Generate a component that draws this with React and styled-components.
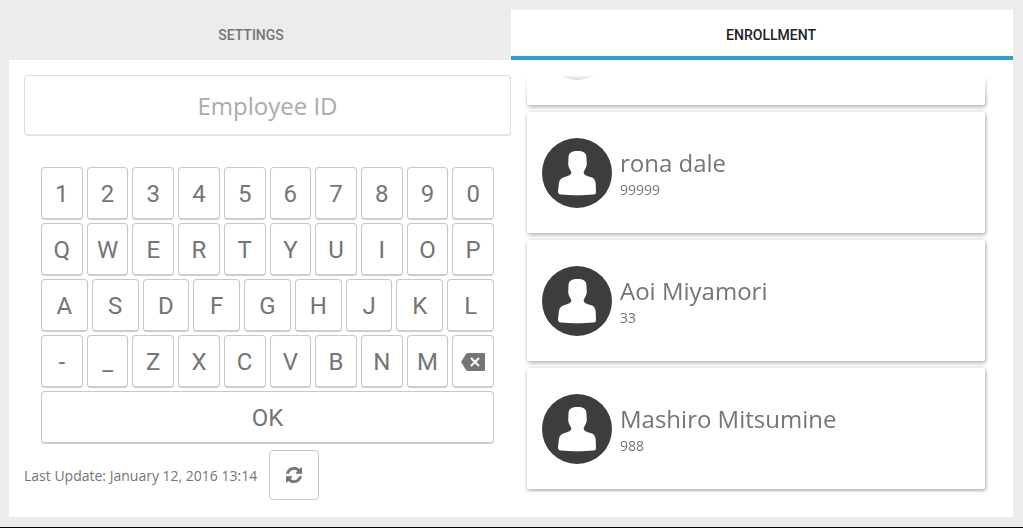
import React, { useState } from "react";
import styled, { createGlobalStyle } from "styled-components";

const rows = [
  ["1", "2", "3", "4", "5", "6", "7", "8", "9", "0"],
  ["Q", "W", "E", "R", "T", "Y", "U", "I", "O", "P"],
  ["A", "S", "D", "F", "G", "H", "J", "K", "L"],
  ["-", "_", "Z", "X", "C", "V", "B", "N", "M", "back"],
  ["OK"],
];

const employees = [
  { id: "", name: "" },
  { id: "99999", name: "rona dale" },
  { id: "33", name: "Aoi Miyamori" },
  { id: "988", name: "Mashiro Mitsumine" },
];

const BackspaceIcon = () => (
  <svg width="24" height="18" viewBox="0 0 24 18" aria-hidden="true">
    <path d="M7 0h16q1 0 1 1v16q0 1-1 1H7q-1 0-2-1L0 9l5-8q1-1 2-1z" fill="#757575" />
    <path d="M10 5l8 8M18 5l-8 8" stroke="#fff" strokeWidth="2" />
  </svg>
);

const RefreshIcon = () => (
  <svg width="16" height="16" viewBox="0 0 1536 1536" aria-hidden="true">
    <path
      fill="#757575"
      stroke="#757575"
      strokeWidth="30"
      d="M1511 928q0 5-1 7-64 268-268 434.500T764 1536q-146 0-282.500-55T238 1324l-129 129q-19 19-45 19t-45-19-19-45V960q0-26 19-45t45-19h448q26 0 45 19t19 45-19 45l-137 137q71 66 161 102t187 36q134 0 250-65t186-179q11-17 53-117 8-23 30-23h192q13 0 22.500 9.500t9.500 22.500zM1536 128v448q0 26-19 45t-45 19h-448q-26 0-45-19t-19-45 19-45l138-138q-148-137-349-137-134 0-250 65T332 500q-11 17-53 117-8 23-30 23H50q-13 0-22.500-9.500T18 608v-7q65-268 270-434.500T768 0q146 0 284 55.500T1297 212l130-129q19-19 45-19t45 19 19 45z"
    />
  </svg>
);

const Avatar = () => (
  <svg width="70" height="70" viewBox="0 0 70 70" aria-hidden="true">
    <circle cx="35" cy="35" r="35" fill="#3d3d3d" />
    <path
      fill="#fff"
      d="M35.500 13C41 13 44.500 14.500 44.500 20L44.800 26C44.800 29 43 31 41.500 34.500C42 37 44.500 38 48.500 39C52.500 40 53.500 43 53.700 46L54 54C54 56 53 56.500 51 56.600C41 57.500 29 57.500 19 56.600C17 56.500 16 55.500 16 53.500L16.800 46C17 42 19 40 22.500 39C26.500 38 29 37 29.500 34.500C28 31.500 26.200 29 26.200 26L26.500 20C26.500 14.500 30 13 35.500 13Z"
    />
  </svg>
);

const App = () => {
  const [tab, setTab] = useState("ENROLLMENT");
  const [employeeId, setEmployeeId] = useState("");

  const pressKey = (key) => {
    if (key === "OK") return;
    if (key === "back") {
      setEmployeeId(employeeId.slice(0, -1));
      return;
    }
    setEmployeeId(employeeId + key);
  };

  return (
    <Page>
      <GlobalStyle />
      <Tabs role="tablist">
        {["SETTINGS", "ENROLLMENT"].map((name) => (
          <Tab
            key={name}
            type="button"
            role="tab"
            aria-selected={tab === name}
            $active={tab === name}
            onClick={() => setTab(name)}
          >
            {name}
          </Tab>
        ))}
      </Tabs>

      <Panel>
        <Entry>
          <IdInput
            type="text"
            aria-label="Employee ID"
            placeholder="Employee ID"
            value={employeeId}
            onChange={(e) => setEmployeeId(e.target.value)}
          />
          <Keyboard>
            {rows.map((row, index) => (
              <KeyRow key={index}>
                {row.map((key) => (
                  <Key
                    key={key}
                    type="button"
                    aria-label={key === "back" ? "Backspace" : undefined}
                    onClick={() => pressKey(key)}
                  >
                    {key === "back" ? <BackspaceIcon /> : key}
                  </Key>
                ))}
              </KeyRow>
            ))}
          </Keyboard>
          <Update>
            <span>Last Update: January 12, 2016 13:14</span>
            <RefreshButton type="button" aria-label="Refresh">
              <RefreshIcon />
            </RefreshButton>
          </Update>
        </Entry>

        <Scroller>
          <List>
            {employees.map(({ id, name }) => (
              <Card key={id}>
                <Avatar />
                <div>
                  <Name>{name}</Name>
                  <Number>{id}</Number>
                </div>
              </Card>
            ))}
          </List>
        </Scroller>
      </Panel>
    </Page>
  );
};

const GlobalStyle = createGlobalStyle`
  * {
    box-sizing: border-box;
  }
  body {
    margin: 0;
    background-color: #ececec;
    color: #757575;
    font-family: "Open Sans", sans-serif;
  }
`;

const Page = styled.main`
  display: flex;
  flex-direction: column;
  height: 100vh;
  padding: 10px 10px 10px 9px;
  border-bottom: 1px solid #000;
`;

const Tabs = styled.div`
  display: grid;
  grid-template-columns: 1fr 1fr;
`;

const Tab = styled.button`
  height: 50px;
  padding: 4px 0 0;
  border: none;
  border-bottom: 4px solid ${({ $active }) => ($active ? "#29a3c8" : "transparent")};
  background-color: ${({ $active }) => ($active ? "#fff" : "transparent")};
  color: ${({ $active }) => ($active ? "#212121" : "#757575")};
  font-family: Roboto, sans-serif;
  font-size: 14px;
  font-weight: 500;
  cursor: pointer;
  &:first-child {
    padding-right: 18px;
  }
  &:last-child {
    padding-left: 18px;
  }
`;

const Panel = styled.section`
  display: grid;
  grid-template-columns: 1fr 1fr;
  grid-template-rows: minmax(0, 1fr);
  flex: 1;
  min-height: 0;
  padding: 15px 0;
  background-color: #fff;
`;

const Entry = styled.div`
  padding-left: 15px;
`;

const IdInput = styled.input`
  display: block;
  width: 100%;
  height: 61px;
  border: 1px solid #dedede;
  border-bottom: 2px solid #e4e4e4;
  border-radius: 4px;
  background-color: #fff;
  color: #757575;
  font-family: "Open Sans", sans-serif;
  font-size: 24px;
  text-align: center;
  &::placeholder {
    color: #ababab;
  }
`;

const Keyboard = styled.div`
  display: flex;
  flex-direction: column;
  gap: 3px;
  padding: 31px 17px 6px;
`;

const KeyRow = styled.div`
  display: flex;
  gap: 4px;
`;

const Key = styled.button`
  display: flex;
  align-items: center;
  justify-content: center;
  flex: 1 1 0;
  min-width: 0;
  height: 53px;
  padding: 1px 0 0;
  border: 1px solid #c8c8c8;
  border-bottom: 2px solid #cccccc;
  border-radius: 4px;
  background-color: #fff;
  color: #757575;
  font-family: Roboto, sans-serif;
  font-size: 24px;
  cursor: pointer;
`;

const Update = styled.div`
  display: flex;
  align-items: center;
  gap: 12px;
  font-size: 14px;
`;

const RefreshButton = styled.button`
  display: flex;
  align-items: center;
  justify-content: center;
  width: 50px;
  height: 50px;
  border: 1px solid #c8c8c8;
  border-radius: 4px;
  background-color: #fff;
  cursor: pointer;
`;

/* reversed column, so that the list starts scrolled to its end */
const Scroller = styled.div`
  display: flex;
  flex-direction: column-reverse;
  margin: 0 25px 10px 13px;
  overflow-y: auto;
  scrollbar-width: none;
  mask-image: linear-gradient(transparent, #000 24px);
`;

const List = styled.ul`
  display: flex;
  flex-direction: column;
  flex-shrink: 0;
  gap: 7px;
  margin: 0;
  padding: 3px;
  list-style: none;
`;

const Card = styled.li`
  display: flex;
  align-items: center;
  gap: 8px;
  height: 121px;
  padding: 0 15px;
  border-radius: 2px;
  background-color: #fff;
  box-shadow: 0 0 2px rgba(0, 0, 0, 0.15), 1px 2px 5px rgba(0, 0, 0, 0.3);
`;

const Name = styled.div`
  padding-top: 2px;
  font-size: 24px;
  line-height: 32px;
`;

const Number = styled.div`
  font-size: 14px;
  line-height: 22px;
`;

export default App;
